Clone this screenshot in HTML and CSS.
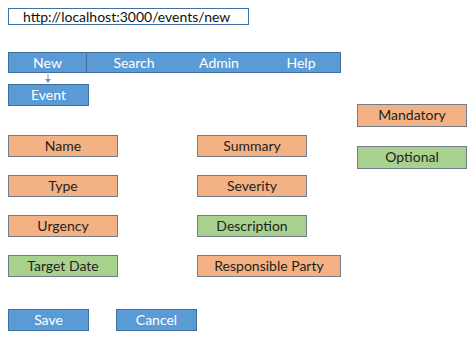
FILE: index.html
```html
<!DOCTYPE html>
<html>
<head>
<meta charset="utf-8">
<link rel="stylesheet" href="styles.css">
</head>
<body>
<div class="page">
  <div class="main">
    <div class="url">http://localhost:3000/events/new</div>
    <nav class="nav">
      <div class="nav-new">New</div>
      <div class="nav-rest">
        <div class="nav-item search">Search</div>
        <div class="nav-item admin">Admin</div>
        <div class="nav-item help">Help</div>
      </div>
    </nav>
    <div class="arrow">
      <svg width="10" height="10" viewBox="0 0 10 10"><line x1="5" y1="0" x2="5" y2="6" stroke="#5b9bd5" stroke-width="1"/><polygon points="2,5 8,5 5,9" fill="#5b9bd5"/></svg>
    </div>
    <div class="box blue event">Event</div>
    <div class="fields">
      <div class="box orange">Name</div>
      <div class="box orange">Summary</div>
      <div class="box orange">Type</div>
      <div class="box orange">Severity</div>
      <div class="box orange">Urgency</div>
      <div class="box green">Description</div>
      <div class="box green">Target Date</div>
      <div class="box orange wide">Responsible Party</div>
    </div>
    <div class="buttons">
      <div class="box blue btn">Save</div>
      <div class="box blue btn">Cancel</div>
    </div>
  </div>
  <aside class="legend">
    <div class="box orange">Mandatory</div>
    <div class="box green">Optional</div>
  </aside>
</div>
</body>
</html>
```
FILE: styles.css
```css
* { box-sizing: border-box; }
html, body { margin: 0; padding: 0; background: #fff; }
body {
  width: 474px;
  height: 349px;
  font-family: "Lato", "Open Sans", sans-serif;
  font-size: 14px;
  color: #1f1f1f;
}
.page {
  display: flex;
  padding: 8px 0 0 8px;
  gap: 16px;
}
.main { width: 333px; display: flex; flex-direction: column; }
.url {
  width: 241px;
  height: 17px;
  border: 1px solid #41719c;
  font-size: 14px;
  line-height: 15px;
  padding-left: 14px;
  color: #111;
}
.nav {
  margin-top: 27px;
  height: 21px;
  display: flex;
  background: #5b9bd5;
  border: 1px solid #41719c;
  color: #fff;
  font-size: 14px;
  line-height: 19px;
}
.nav-new {
  width: 80px;
  text-align: center;
  border-right: 1px solid #41719c;
}
.nav-rest { flex: 1; display: flex; padding-left: 5px; }
.nav-item { text-align: center; }
.search { width: 84px; }
.admin { width: 86px; }
.help { width: 78px; }
.arrow { height: 11px; padding-left: 35px; padding-top: 1px; }
.arrow svg { display: block; }
.box {
  height: 22px;
  border: 1px solid #6f7d8c;
  text-align: center;
  line-height: 20px;
  font-size: 14px;
}
.orange { background: #f4b183; }
.green { background: #a9d18e; }
.blue { background: #5b9bd5; border-color: #41719c; color: #fff; }
.event { width: 81px; }
.fields {
  margin-top: 29px;
  display: grid;
  grid-template-columns: 110px 111px;
  column-gap: 79px;
  row-gap: 18px;
  justify-items: start;
}
.fields .box { width: 110px; }
.fields .box.wide { width: 144px; }
.buttons {
  margin-top: 32px;
  display: flex;
  gap: 27px;
}
.btn { width: 81px; }
.legend {
  margin-top: 96px;
  display: flex;
  flex-direction: column;
  gap: 19px;
}
.legend .box { width: 110px; height: 23px; line-height: 20px; }
```
